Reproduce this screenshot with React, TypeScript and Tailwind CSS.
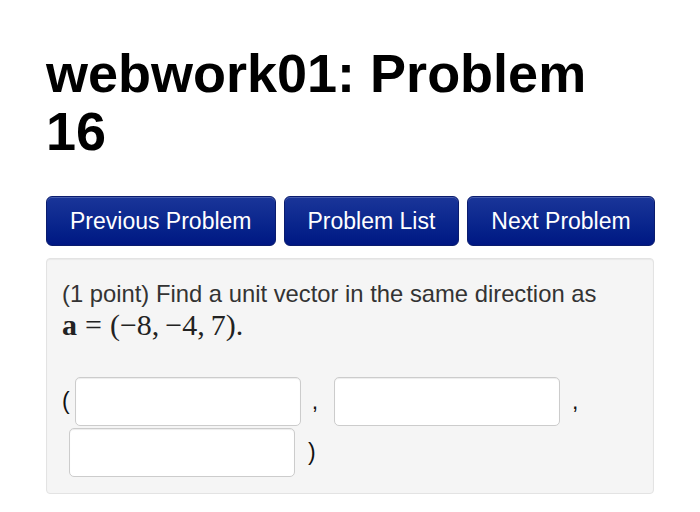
const navButtons = ["Previous Problem", "Problem List", "Next Problem"];

function AnswerBox({ className = "" }: { className?: string }) {
  return (
    <input
      type="text"
      aria-label="answer"
      className={`h-[49px] w-[226px] shrink-0 rounded-[5px] border border-[#cccccc] bg-white shadow-[inset_0_1px_1px_rgba(0,0,0,0.075)] outline-none ${className}`}
    />
  );
}

export default function App() {
  return (
    <div className="min-h-screen bg-white px-[46px] pt-[44px] font-['Liberation_Sans',Arial,sans-serif]">
      {/* Title */}
      <h1 className="text-[54px] font-bold leading-[58px] text-black">
        webwork01: Problem 16
      </h1>

      {/* Navigation */}
      <div className="mt-[36px] flex gap-2">
        {navButtons.map((label) => (
          <button
            key={label}
            className="h-[50px] whitespace-nowrap rounded-[6px] border border-[#0a1c6e] bg-gradient-to-b from-[#1a3599] to-[#001783] px-[23px] text-[23px] text-white shadow-[inset_0_1px_0_rgba(255,255,255,0.2)]"
          >
            {label}
          </button>
        ))}
      </div>

      {/* Problem well */}
      <div className="mt-[12px] rounded-[4px] border border-[#e3e3e3] bg-[#f5f5f5] px-[15px] pb-[16px] pt-[20px] text-[#333333] shadow-[inset_0_1px_1px_rgba(0,0,0,0.05)]">
        <p className="text-[23.8px] leading-[30px]">
          (1 point) Find a unit vector in the same direction as
        </p>
        <p className="flex items-baseline font-['Liberation_Serif','Times_New_Roman',serif] text-[30px] leading-[32px] text-[#222]">
          <span className="font-bold">a</span>
          <span className="mx-[8px]">=</span>
          <span>(−8,</span>
          <span className="ml-[6px]">−4,</span>
          <span className="ml-[6px]">7).</span>
        </p>

        <div className="mt-[36px] text-[23px] text-[#111]">
          <div className="flex items-center">
            <span>(</span>
            <AnswerBox className="ml-[5px]" />
            <span className="ml-[11px]">,</span>
            <AnswerBox className="ml-[16px]" />
            <span className="ml-[12px]">,</span>
          </div>
          <div className="mt-[2px] flex items-center">
            <AnswerBox className="ml-[7px]" />
            <span className="ml-[13px]">)</span>
          </div>
        </div>
      </div>
    </div>
  );
}
